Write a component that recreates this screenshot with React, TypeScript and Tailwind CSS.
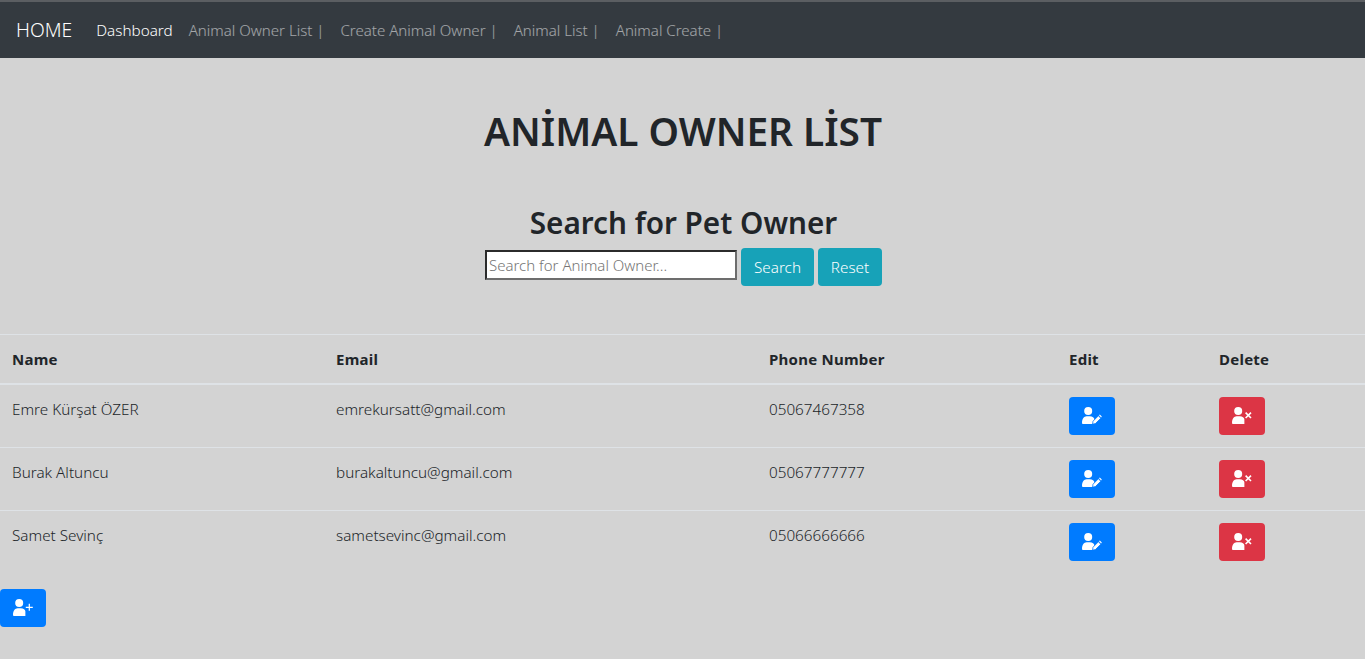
import type { ReactNode } from 'react'

const navLinks = ['Animal Owner List |', 'Create Animal Owner |', 'Animal List |', 'Animal Create |']

const owners = [
  { name: 'Emre Kürşat ÖZER', email: 'emrekursatt@gmail.com', phone: '05067467358' },
  { name: 'Burak Altuncu', email: 'burakaltuncu@gmail.com', phone: '05067777777' },
  { name: 'Samet Sevinç', email: 'sametsevinc@gmail.com', phone: '05066666666' },
]

// person shape shared by the three action icons
function UserIcon({ children }: { children: ReactNode }) {
  return (
    <svg width="20" height="17" viewBox="0 0 20 17" fill="currentColor">
      <circle cx="6.2" cy="4" r="4" />
      <path d="M0 15.4C0 12 2 9.2 4.6 9.2h3.2c2.6 0 4.6 1.6 4.6 3.4V17H1.2C.5 17 0 16.4 0 15.4z" />
      {children}
    </svg>
  )
}

const EditIcon = () => (
  <UserIcon>
    <path d="M11 14.2l5.4-5.4 2.4 2.4-5.4 5.4-2.8.5z" stroke="#007bff" strokeWidth="0.8" />
    <path d="M17 8.2l.8-.7 2 2-.7.9z" />
  </UserIcon>
)

const DeleteIcon = () => (
  <UserIcon>
    <path d="M13.6 5.6l5.4 5.4M19 5.6l-5.4 5.4" stroke="currentColor" strokeWidth="1.6" fill="none" />
  </UserIcon>
)

const AddIcon = () => (
  <UserIcon>
    <path d="M16.3 4.8v7M12.8 8.3h7" stroke="currentColor" strokeWidth="1.2" fill="none" />
  </UserIcon>
)

export default function App() {
  return (
    <div className="min-h-[659px] bg-[#d3d3d3] text-[#212529] font-['Noto_Sans','Open_Sans',sans-serif] text-[15.25px] font-light">
      {/* Navbar */}
      <nav className="h-[58px] bg-[#343a40] border-t-2 border-[#5b5e62] flex items-center pl-4">
        <a className="text-white text-[19.3px] mr-6">HOME</a>
        <a className="text-white mr-4">Dashboard</a>
        {navLinks.map((link) => (
          <a key={link} className="text-white/55 text-[15.05px] mr-4">
            {link}
          </a>
        ))}
      </nav>

      <h1 className="text-center text-[38.8px] leading-[48px] font-semibold mt-[49px] pl-px">ANİMAL OWNER LİST</h1>

      <h2 className="text-center text-[29.7px] leading-[36px] font-semibold mt-[50px] pl-[2px]">Search for Pet Owner</h2>
      <div className="flex justify-center items-start gap-1 mt-[7px] mb-[48px] pl-[2px]">
        <input
          placeholder="Search for Animal Owner..."
          className="w-[252px] h-[30px] mt-[2px] bg-white px-[2px] text-[15px] font-light border-2 border-t-[#2b2b2b] border-l-[#2b2b2b] border-r-[#6d6d6d] border-b-[#6d6d6d] placeholder:text-[#757575]"
        />
        <button className="w-[73px] h-[38px] rounded bg-[#17a2b8] text-white">Search</button>
        <button className="w-[64px] h-[38px] rounded bg-[#17a2b8] text-white">Reset</button>
      </div>

      {/* Owner table */}
      <table className="w-full table-fixed border-collapse">
        <thead>
          <tr className="border-t border-[#dee2e6] border-b-2 h-[49px] text-[15px] tracking-[0.25px]">
            <th className="w-[324px] px-3 pt-px text-left font-bold">Name</th>
            <th className="w-[433px] px-3 pt-px text-left font-bold">Email</th>
            <th className="w-[300px] px-3 pt-px text-left font-bold">Phone Number</th>
            <th className="w-[150px] px-3 pt-px text-left font-bold">Edit</th>
            <th className="px-3 pt-px text-left font-bold">Delete</th>
          </tr>
        </thead>
        <tbody>
          {owners.map((owner) => (
            <tr key={owner.email} className="border-b border-[#dee2e6] last:border-b-0 align-top">
              <td className="px-3 pt-[13px]">{owner.name}</td>
              <td className="px-3 pt-[13px]">{owner.email}</td>
              <td className="px-3 pt-[13px]">{owner.phone}</td>
              <td className="p-3">
                <button className="w-[46px] h-[38px] rounded bg-[#007bff] text-white flex items-center justify-center">
                  <EditIcon />
                </button>
              </td>
              <td className="p-3">
                <button className="w-[46px] h-[38px] rounded bg-[#dc3545] text-white flex items-center justify-center">
                  <DeleteIcon />
                </button>
              </td>
            </tr>
          ))}
        </tbody>
      </table>

      <button className="w-[46px] h-[38px] mt-[16px] rounded bg-[#007bff] text-white flex items-center justify-center">
        <AddIcon />
      </button>
    </div>
  )
}
